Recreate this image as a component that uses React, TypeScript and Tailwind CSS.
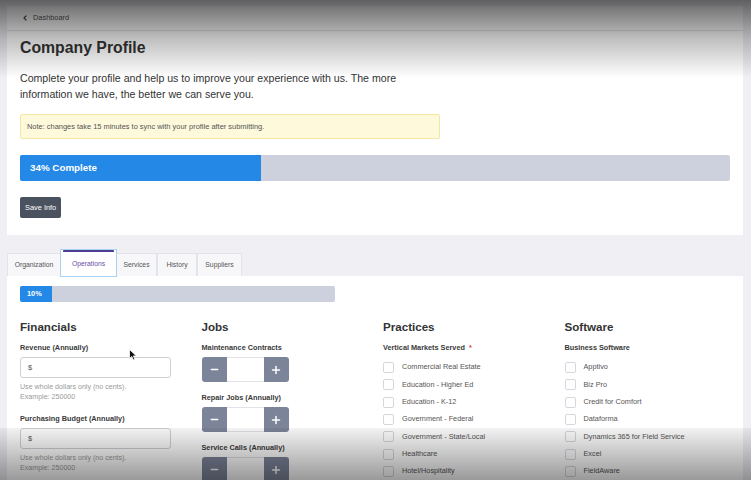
import React from "react"
import { ChevronLeft, Minus, Plus } from "lucide-react"

const tabs = [
  { name: "Organization", w: "w-[54px]" },
  { name: "Operations", w: "w-[55px]", active: true },
  { name: "Services", w: "w-[41px]" },
  { name: "History", w: "w-[40px]" },
  { name: "Suppliers", w: "w-[45px]" },
]

const markets = [
  "Commercial Real Estate",
  "Education - Higher Ed",
  "Education - K-12",
  "Government - Federal",
  "Government - State/Local",
  "Healthcare",
  "Hotel/Hospitality",
]

const software = [
  "Apptivo",
  "Biz Pro",
  "Credit for Comfort",
  "Dataforma",
  "Dynamics 365 for Field Service",
  "Excel",
  "FieldAware",
]

const MoneyField = ({ label }: { label: string }) => (
  <div className="flex flex-col">
    <div className="text-[7.3px] leading-[10px] font-bold text-[#3a3a3a]">{label}</div>
    <div className="mt-[4px] flex h-[21px] w-[151px] items-center rounded-[3px] border border-[#cfcfd6] bg-white px-[7px] text-[7.4px] text-[#555]">
      $
    </div>
    <div className="mt-[4px] text-[7.1px] leading-[10px] text-[#9a9a9a]">
      <div>Use whole dollars only (no cents).</div>
      <div>Example: 250000</div>
    </div>
  </div>
)

const Stepper = ({ label }: { label: string }) => (
  <div className="flex flex-col">
    <div className="text-[7.3px] leading-[10px] font-bold text-[#3a3a3a]">{label}</div>
    <div className="mt-[4px] flex h-[25px] w-[87px]">
      <div className="flex w-[25px] items-center justify-center rounded-l-[3px] bg-[#7c8499] text-white">
        <Minus size={11} strokeWidth={3.2} />
      </div>
      <div className="flex-1 border-y border-[#e2e2e8] bg-white" />
      <div className="flex w-[25px] items-center justify-center rounded-r-[3px] bg-[#7c8499] text-white">
        <Plus size={12} strokeWidth={3} />
      </div>
    </div>
  </div>
)

const CheckList = ({ items }: { items: string[] }) => (
  <div className="mt-[6px] flex flex-col">
    {items.map((item) => (
      <div key={item} className="flex h-[17.33px] items-center gap-[8px]">
        <div className="h-[11px] w-[11px] rounded-[2px] border border-[#d6d6dd] bg-white" />
        <span className="text-[7.3px] text-[#555]">{item}</span>
      </div>
    ))}
  </div>
)

export default function App() {
  return (
    <div className="relative h-[480px] w-[751px] overflow-hidden bg-[#efeff4] font-['Liberation_Sans',Arial,sans-serif] text-[#333]">
      <div className="px-[7px] pr-[8px] pt-[6px]">
        {/* profile card */}
        <div className="bg-white">
          <div className="flex h-[25px] items-center gap-[4px] border-b border-[#e6e6ec] px-[14px] text-[7.4px] text-[#555]">
            <ChevronLeft size={8} strokeWidth={3.5} className="text-[#444]" />
            <span>Dashboard</span>
          </div>
          <div className="px-[13px] pt-[7px] pb-[17px]">
            <h1 className="text-[15.8px] leading-[20px] font-bold text-[#333]">Company Profile</h1>
            <p className="mt-[12px] max-w-[400px] text-[10.6px] leading-[16px] text-[#333]">
              Complete your profile and help us to improve your experience with us. The more information we have, the
              better we can serve you.
            </p>
            <div className="mt-[12px] flex h-[25px] w-[420px] items-center rounded-[2px] border border-[#f3e7a6] bg-[#fef9db] px-[6px] text-[7.45px] text-[#555]">
              Note: changes take 15 minutes to sync with your profile after submitting.
            </div>
            <div className="mt-[16px] flex h-[26px] w-[710px] overflow-hidden rounded-[2px] bg-[#cdd0dd]">
              <div className="flex w-[34%] items-center bg-[#2488e6] pl-[10px] text-[9.8px] font-bold text-white">
                34% Complete
              </div>
            </div>
            <button className="mt-[16px] flex h-[21px] items-center rounded-[2px] bg-[#4a525f] px-[5px] text-[7.4px] text-white">
              Save Info
            </button>
          </div>
        </div>

        {/* tabs */}
        <div className="mt-[15px] flex items-end">
          {tabs.map((t) =>
            t.active ? (
              <div
                key={t.name}
                className={`${t.w} relative z-10 flex h-[26px] flex-col bg-white ring-1 ring-[#a9d3f3]`}
              >
                <div className="mx-[2px] h-[2px] rounded-t-[1px] bg-[#4b3d8f]" />
                <div className="flex flex-1 items-center justify-center text-[6.8px] text-[#6b4fa6]">{t.name}</div>
              </div>
            ) : (
              <div
                key={t.name}
                className={`${t.w} flex h-[23px] items-center justify-center border border-b-0 border-[#e3e3ea] bg-[#f7f7f9] text-[6.8px] text-[#555]`}
              >
                {t.name}
              </div>
            )
          )}
        </div>

        {/* operations card */}
        <div className="h-[220px] bg-white px-[13px] pt-[10px]">
          <div className="flex h-[16px] w-[315px] overflow-hidden rounded-[2px] bg-[#cdd0dd]">
            <div className="flex w-[10%] items-center bg-[#2488e6] pl-[7px] text-[7.4px] font-bold text-white">10%</div>
          </div>

          <div className="mt-[18px] grid grid-cols-4 gap-x-[16px]">
            <div className="flex flex-col">
              <h2 className="text-[11.6px] leading-[14px] font-bold text-[#333]">Financials</h2>
              <div className="mt-[9px] flex flex-col gap-[12px]">
                <MoneyField label="Revenue (Annually)" />
                <MoneyField label="Purchasing Budget (Annually)" />
              </div>
            </div>
            <div className="flex flex-col">
              <h2 className="text-[11.6px] leading-[14px] font-bold text-[#333]">Jobs</h2>
              <div className="mt-[9px] flex flex-col gap-[11px]">
                <Stepper label="Maintenance Contracts" />
                <Stepper label="Repair Jobs (Annually)" />
                <Stepper label="Service Calls (Annually)" />
              </div>
            </div>
            <div className="flex flex-col">
              <h2 className="text-[11.6px] leading-[14px] font-bold text-[#333]">Practices</h2>
              <div className="mt-[9px] text-[7.3px] leading-[10px] font-bold text-[#3a3a3a]">
                Vertical Markets Served <span className="ml-[2px] text-[#e0383e]">*</span>
              </div>
              <CheckList items={markets} />
            </div>
            <div className="flex flex-col">
              <h2 className="text-[11.6px] leading-[14px] font-bold text-[#333]">Software</h2>
              <div className="mt-[9px] text-[7.3px] leading-[10px] font-bold text-[#3a3a3a]">Business Software</div>
              <CheckList items={software} />
            </div>
          </div>
        </div>
      </div>

      {/* mouse pointer */}
      <svg className="pointer-events-none absolute left-[129px] top-[349px]" width="8" height="12" viewBox="0 0 8 12">
        <path d="M0.5 0.5 L0.5 9.5 L2.8 7.4 L4.4 11 L5.9 10.3 L4.4 6.9 L7.4 6.9 Z" fill="#111" stroke="#fff" strokeWidth="0.8" />
      </svg>

      {/* video shading */}
      <div className="pointer-events-none absolute inset-x-0 top-0 h-[78px] bg-linear-to-b from-black/60 via-black/25 to-transparent" />
      <div className="pointer-events-none absolute inset-x-0 bottom-0 h-[52px] bg-linear-to-t from-black/40 to-black/5" />
    </div>
  )
}
